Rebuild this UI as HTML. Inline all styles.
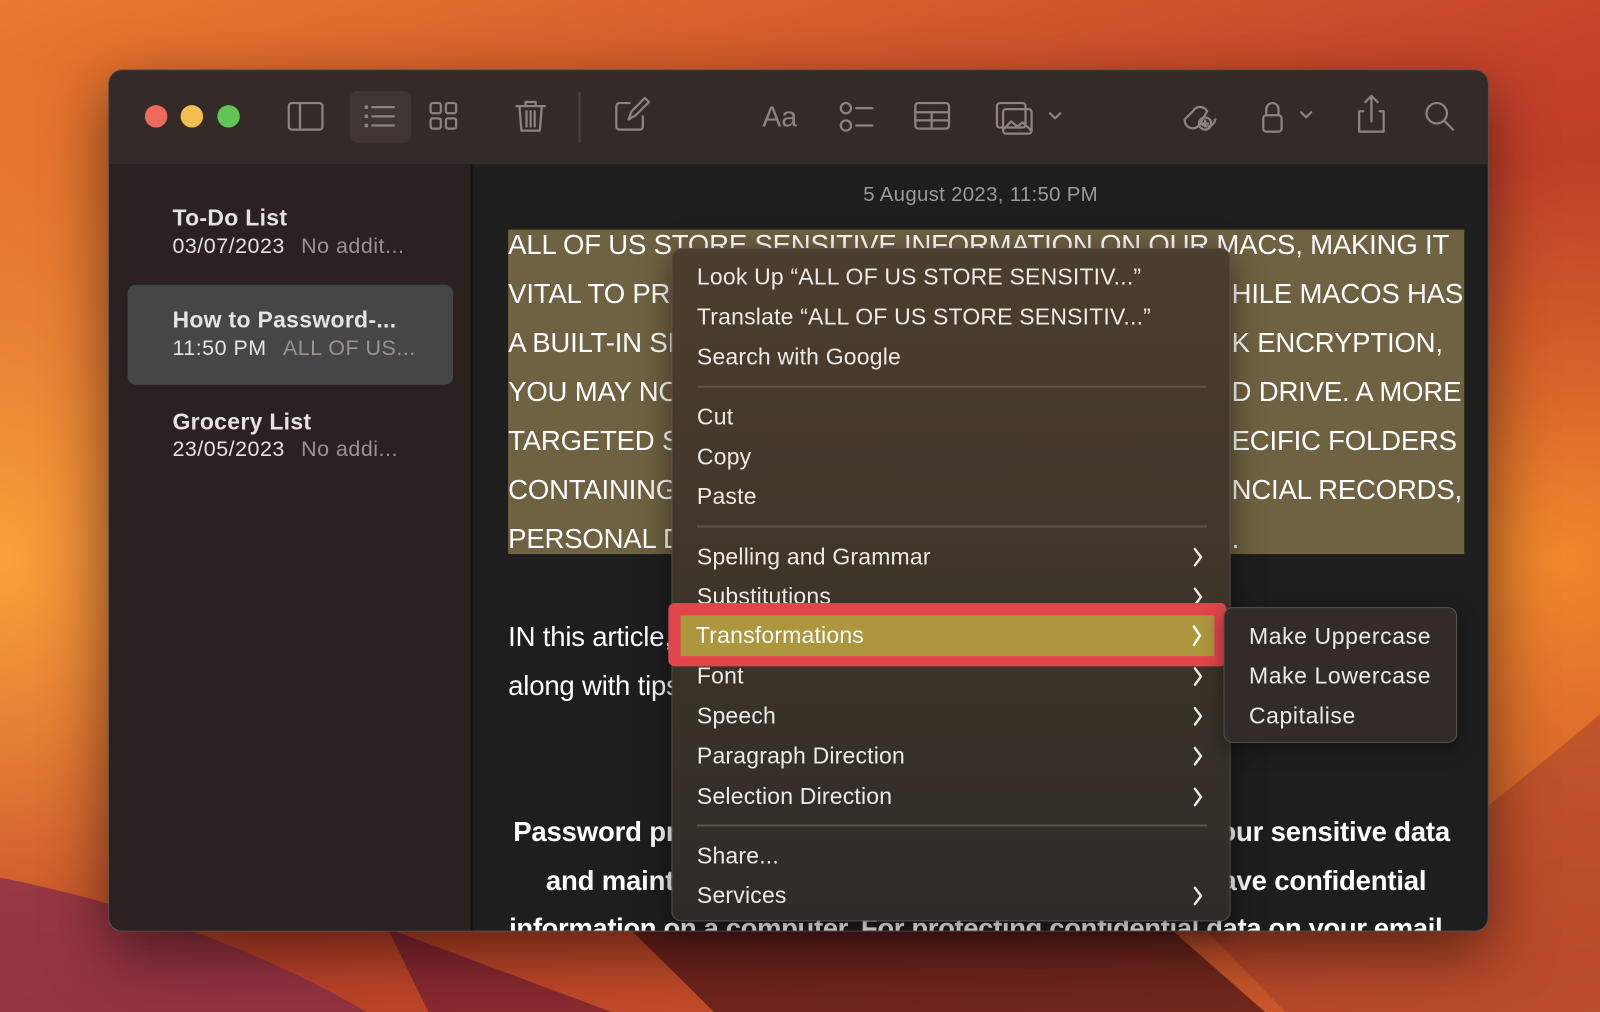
<!DOCTYPE html>
<html><head><meta charset="utf-8"><style>
*{margin:0;padding:0;box-sizing:border-box}
html,body{width:1600px;height:1012px;overflow:hidden;font-family:"Liberation Sans",sans-serif}
#bg{position:absolute;left:0;top:0;width:1600px;height:1012px;background:
radial-gradient(ellipse 500px 400px at 1560px 560px,#f0882c 0%,rgba(240,136,44,0) 100%),
radial-gradient(ellipse 400px 500px at 0px 560px,#f9a23a 0%,rgba(249,162,58,0) 100%),
linear-gradient(160deg,#e97a2e 0%,#c4412a 40%,#b73a26 60%,#d1602c 100%);}
#s{position:absolute;left:0;top:0;width:1568px;height:992px;transform:scale(1.0204);transform-origin:0 0}
.a{position:absolute}
.win{left:106px;top:68px;width:1353px;height:845px;border-radius:14px;overflow:hidden;background:#1e1e1e;border:1px solid #5a504c;box-shadow:0 20px 60px rgba(0,0,0,.5)}
.tb{left:0;top:0;width:1353px;height:92px;background:#342a27}
.sb{left:0;top:92px;width:356px;height:753px;background:#2a2120;border-right:2px solid #111}
.t{font-weight:bold;font-size:22.5px;color:#e6e2e0;white-space:nowrap;letter-spacing:0.3px}
.st{font-size:21px;color:#e6e2e0;white-space:nowrap;letter-spacing:0.5px}
.st span{color:#9a9490;margin-left:16px}
.ln{font-size:27px;color:#fff;white-space:nowrap;letter-spacing:-0.2px}
.b{font-weight:bold;font-size:27px}
.menu{left:658px;top:243px;width:548px;height:660px;border-radius:10px;background:linear-gradient(180deg,#4a3e2e 0%,#3e3529 50%,#2f2b28 100%);border:1px solid #5a5048;box-shadow:0 8px 30px rgba(0,0,0,.5)}
.mi{position:absolute;left:24px;font-size:22.5px;color:#eeeae6;white-space:nowrap;line-height:26px;letter-spacing:0.2px}
.sep{position:absolute;left:24px;width:500px;height:2px;background:#5d5247}
.ic{stroke:#8d8482;fill:none;stroke-width:2.2;stroke-linecap:round;stroke-linejoin:round}
</style></head><body>
<div id="bg"></div>
<div id="s">
<svg class="a" style="left:0;top:0" width="1568" height="992"><path d="M0 860 Q200 900 360 992 L0 992Z" fill="#8a2e48" opacity=".8"/><path d="M380 910 L600 992 L420 992Z" fill="#7a2232" opacity=".8"/><path d="M1180 910 L1260 992 L1568 992 L1568 700 Q1450 800 1300 910Z" fill="#a33a2a" opacity=".5"/><path d="M620 913 L1150 913 L1240 992 L700 992Z" fill="#4a1418" opacity=".7"/></svg>
<div class="a win">
 <div class="a tb">
  <div class="a" style="left:35px;top:34px;width:22px;height:22px;border-radius:50%;background:#ec6a5e"></div>
  <div class="a" style="left:70px;top:34px;width:22px;height:22px;border-radius:50%;background:#f4bf4f"></div>
  <div class="a" style="left:106px;top:34px;width:22px;height:22px;border-radius:50%;background:#61c554"></div>
  <div class="a" style="left:236px;top:20px;width:60px;height:51px;border-radius:8px;background:#3f3532"></div>
  <svg class="a" style="left:0;top:0" width="1353" height="92">
   <g class="ic">
    <rect x="176" y="32" width="33" height="26" rx="3"/><line x1="187" y1="32" x2="187" y2="58"/>
    <line x1="258" y1="36" x2="279" y2="36"/><line x1="258" y1="45" x2="279" y2="45"/><line x1="258" y1="54" x2="279" y2="54"/><circle cx="252" cy="36" r=".8"/><circle cx="252" cy="45" r=".8"/><circle cx="252" cy="54" r=".8"/>
    <rect x="315" y="32" width="10" height="10" rx="2"/><rect x="330" y="32" width="10" height="10" rx="2"/><rect x="315" y="47" width="10" height="10" rx="2"/><rect x="330" y="47" width="10" height="10" rx="2"/>
    <path d="M399 35h28M408 35v-4h10v4M402 35l2 24h18l2-24M409 40v15M413 40v15M417 40v15"/>
    <line x1="461" y1="22" x2="461" y2="70" stroke="#4a403c"/>
    <path d="M510 32h-10a3 3 0 0 0-3 3v20a3 3 0 0 0 3 3h20a3 3 0 0 0 3-3v-10M509 48l3-8 13-13 4 4-13 13z"/>
    <circle cx="722" cy="37" r="5"/><circle cx="722" cy="54" r="5"/><line x1="732" y1="37" x2="748" y2="37"/><line x1="732" y1="54" x2="748" y2="54"/>
    <rect x="790" y="32" width="33" height="25" rx="3"/><line x1="790" y1="41" x2="823" y2="41"/><line x1="790" y1="49" x2="823" y2="49"/><line x1="806" y1="41" x2="806" y2="57"/>
    <rect x="870" y="32" width="28" height="24" rx="3"/><rect x="876" y="38" width="28" height="24" rx="3"/><path d="M876 58l8-8 6 5 5-4 9 8"/><path d="M922 42l5 5 5-5"/>
    <path d="M1062 40a8 8 0 0 1 14 0l-8 14a8 8 0 0 1-14-6zM1070 52a8 8 0 0 0 14-4"/><circle cx="1074" cy="52" r="6"/><path d="M1074 49v6M1071 52h6"/>
    <rect x="1131" y="44" width="18" height="16" rx="3"/><path d="M1134 44v-6a6 6 0 0 1 12 0v6"/><path d="M1168 41l5 5 5-5"/>
    <path d="M1229 40h-4v20h24v-20h-4M1237 50v-24M1231 31l6-6 6 6"/>
    <circle cx="1301" cy="42" r="10"/><line x1="1309" y1="50" x2="1317" y2="58"/>
   </g>
   <text x="640" y="55" font-family="Liberation Sans" font-size="28" fill="#8d8482">Aa</text>
  </svg>
 </div>
 <div class="a sb">
  <div class="a t" style="left:62px;top:40px">To-Do List</div>
  <div class="a st" style="left:62px;top:69px">03/07/2023<span>No addit...</span></div>
  <div class="a" style="left:18px;top:118px;width:319px;height:98px;border-radius:8px;background:#474646"></div>
  <div class="a t" style="left:62px;top:140px">How to Password-...</div>
  <div class="a st" style="left:62px;top:169px">11:50 PM<span>ALL OF US...</span></div>
  <div class="a t" style="left:62px;top:240px">Grocery List</div>
  <div class="a st" style="left:62px;top:268px">23/05/2023<span>No addi...</span></div>
 </div>
 <div class="a" style="left:739px;top:111px;font-size:20px;color:#9c9a98;letter-spacing:0.3px">5 August 2023, 11:50 PM</div>
 <div class="a" style="left:391px;top:156px;width:937px;height:318px;background:#6f6242"></div>
 <div class="a ln" style="left:391px;top:156px">ALL OF US STORE SENSITIVE INFORMATION ON OUR MACS, MAKING IT</div>
 <div class="a ln" style="left:391px;top:204px">VITAL TO PR</div><div class="a ln" style="left:1100px;top:204px">HILE MACOS HAS</div>
 <div class="a ln" style="left:391px;top:252px">A BUILT-IN SI</div><div class="a ln" style="left:1100px;top:252px">K ENCRYPTION,</div>
 <div class="a ln" style="left:391px;top:300px">YOU MAY NC</div><div class="a ln" style="left:1100px;top:300px">D DRIVE. A MORE</div>
 <div class="a ln" style="left:391px;top:348px">TARGETED S</div><div class="a ln" style="left:1100px;top:348px">ECIFIC FOLDERS</div>
 <div class="a ln" style="left:391px;top:396px">CONTAINING</div><div class="a ln" style="left:1100px;top:396px">NCIAL RECORDS,</div>
 <div class="a ln" style="left:391px;top:444px">PERSONAL D</div><div class="a ln" style="left:1100px;top:444px">.</div>
 <div class="a ln" style="left:391px;top:540px">IN this article,</div>
 <div class="a ln" style="left:391px;top:588px">along with tips</div>
 <div class="a ln b" style="left:396px;top:731px">Password pr</div><div class="a ln b" style="left:1088px;top:731px">our sensitive data</div>
 <div class="a ln b" style="left:428px;top:779px">and maint</div><div class="a ln b" style="left:1090px;top:779px">ave confidential</div>
 <div class="a ln b" style="left:392px;top:826px;letter-spacing:-0.4px">information on a computer. For protecting confidential data on your email</div>
</div>
<div class="a menu">
 <div class="mi" style="top:15px">Look Up “ALL OF US STORE SENSITIV...”</div>
 <div class="mi" style="top:54px">Translate “ALL OF US STORE SENSITIV...”</div>
 <div class="mi" style="top:93px">Search with Google</div>
 <div class="sep" style="top:134px"></div>
 <div class="mi" style="top:152px">Cut</div>
 <div class="mi" style="top:191px">Copy</div>
 <div class="mi" style="top:230px">Paste</div>
 <div class="sep" style="top:271px"></div>
 <div class="mi" style="top:289px">Spelling and Grammar</div>
 <div class="mi" style="top:328px">Substitutions</div>
 <div class="mi" style="top:406px">Font</div>
 <div class="mi" style="top:445px">Speech</div>
 <div class="mi" style="top:484px">Paragraph Direction</div>
 <div class="mi" style="top:524px">Selection Direction</div>
 <div class="sep" style="top:564px"></div>
 <div class="mi" style="top:582px">Share...</div>
 <div class="mi" style="top:621px">Services</div>
 <svg class="a" style="left:0;top:0" width="548" height="660"><g stroke="#eeeae6" stroke-width="2.4" fill="none" stroke-linecap="round" stroke-linejoin="round">
  <path d="M512 294l6 8-6 8"/><path d="M512 333l6 8-6 8"/><path d="M512 411l6 8-6 8"/><path d="M512 450l6 8-6 8"/><path d="M512 489l6 8-6 8"/><path d="M512 529l6 8-6 8"/><path d="M512 626l6 8-6 8"/></g></svg>
</div>
<div class="a" style="left:655px;top:591px;width:547px;height:62px;border-radius:6px;background:#e0464b"></div>
<div class="a" style="left:667px;top:603px;width:523px;height:40px;background:#ae963f"></div>
<div class="a" style="left:682px;top:610px;font-size:22.5px;color:#fff;line-height:26px;letter-spacing:0.2px">Transformations</div>
<svg class="a" style="left:1160px;top:610px" width="30" height="30"><path d="M10 4l6 9-6 9" stroke="#fff" stroke-width="2.4" fill="none" stroke-linecap="round" stroke-linejoin="round"/></svg>
<div class="a" style="left:1199px;top:595px;width:229px;height:133px;border-radius:9px;background:#322b28;border:1px solid #5a524d;box-shadow:0 6px 20px rgba(0,0,0,.4)">
 <div class="mi" style="top:15px;letter-spacing:0.6px">Make Uppercase</div>
 <div class="mi" style="top:54px;letter-spacing:0.6px">Make Lowercase</div>
 <div class="mi" style="top:93px;letter-spacing:0.6px">Capitalise</div>
</div>
</div>
</body></html>
